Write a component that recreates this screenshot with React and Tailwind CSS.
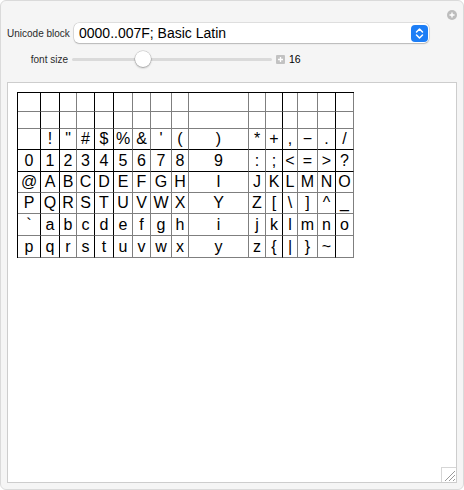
import React from "react";

// column right-border colours, one per column (black or mid gray like the reference)
const colLine = [
  "border-r-black",
  "border-r-black",
  "border-r-[#7f7f7f]",
  "border-r-black",
  "border-r-black",
  "border-r-[#7f7f7f]",
  "border-r-[#7f7f7f]",
  "border-r-[#7f7f7f]",
  "border-r-[#7f7f7f]",
  "border-r-[#7f7f7f]",
  "border-r-[#7f7f7f]",
  "border-r-black",
  "border-r-[#7f7f7f]",
  "border-r-[#7f7f7f]",
  "border-r-black",
  "border-r-[#7f7f7f]",
];

const rowLine = [
  "border-b-[#7f7f7f]",
  "border-b-[#7f7f7f]",
  "border-b-black",
  "border-b-black",
  "border-b-[#7f7f7f]",
  "border-b-[#7f7f7f]",
  "border-b-[#7f7f7f]",
  "border-b-[#7f7f7f]",
];

const rows = [
  Array(16).fill(""),
  Array(16).fill(""),
  [" ", "!", '"', "#", "$", "%", "&", "'", "(", ")", "*", "+", ",", "−", ".", "/"],
  "0123456789:;<=>?".split(""),
  "@ABCDEFGHIJKLMNO".split(""),
  "PQRSTUVWXYZ[\\]^_".split(""),
  "`abcdefghijklmno".split(""),
  [..."pqrstuvwxyz{|}~".split(""), ""],
];

function CharGrid() {
  return (
    <div className="grid grid-cols-[23px_19px_17px_18px_19px_19px_18px_21px_17px_60px_17px_17px_15px_20px_18px_18px] grid-rows-[19px_17px_21px_22px_21px_21px_22px_22px] w-fit border-l border-t border-black">
      {rows.map((r, ri) =>
        r.map((ch, ci) => (
          <div
            key={ri + "-" + ci}
            className={
              "flex items-center justify-center border-r border-b text-[16px] leading-none text-black " +
              colLine[ci] +
              " " +
              rowLine[ri]
            }
          >
            {ch}
          </div>
        ))
      )}
    </div>
  );
}

export default function App() {
  return (
    <div className="relative w-[464px] h-[490px] bg-[#f5f5f5] border border-[#dadada] rounded-[6px] pt-[22px] font-['Liberation_Sans',Arial,sans-serif] overflow-hidden">
      {/* little add-bookmark button in the corner */}
      <svg className="absolute right-[6px] top-[9px]" width="10" height="10" viewBox="0 0 10 10">
        <circle cx="5" cy="5" r="5" fill="#bdbdbd" />
        <path d="M5 2.5v5M2.5 5h5" stroke="white" strokeWidth="1.4" />
      </svg>

      {/* Unicode block popup */}
      <div className="flex items-center h-[20px] ml-[6px]">
        <div className="w-[61px] text-right text-[10px] text-[#2a2a2a] whitespace-nowrap">Unicode block</div>
        <div className="ml-[6px] w-[355px] h-[20px] flex items-center justify-between bg-white rounded-[5px] shadow-[0_0_0_0.5px_rgba(0,0,0,0.18),0_1px_1.5px_rgba(0,0,0,0.18)] pl-[5px] pr-[1px]">
          <span className="text-[14px] text-black leading-none">0000..007F; Basic Latin</span>
          <div className="w-[17px] h-[17px] rounded-[4px] bg-[#1d7ef6] flex items-center justify-center">
            <svg width="9" height="13" viewBox="0 0 9 13">
              <path d="M1.5 5 L4.5 2 L7.5 5 M1.5 8 L4.5 11 L7.5 8" fill="none" stroke="white" strokeWidth="1.5" strokeLinecap="round" strokeLinejoin="round" />
            </svg>
          </div>
        </div>
      </div>

      {/* font size slider */}
      <div className="flex items-center h-[20px] ml-[6px] mt-[6px]">
        <div className="w-[61px] text-right text-[10px] text-[#2a2a2a] whitespace-nowrap">font size</div>
        <div className="relative ml-[4px] w-[200px] h-[16px] flex items-center">
          <div className="w-full h-[3px] rounded-full bg-[#dadada]" />
          <div className="absolute left-[63px] top-0 w-[16px] h-[16px] rounded-full bg-white shadow-[0_0_0_0.5px_rgba(0,0,0,0.2),0_1px_2px_rgba(0,0,0,0.3)]" />
        </div>
        <svg className="ml-[4px]" width="9" height="9" viewBox="0 0 9 9">
          <rect width="9" height="9" rx="1" fill="#c2c2c2" />
          <path d="M4.5 2v5M2 4.5h5" stroke="white" strokeWidth="1.3" />
        </svg>
        <span className="ml-[4px] text-[10.5px] text-black leading-none">16</span>
      </div>

      {/* output pane */}
      <div className="relative mt-[13px] mx-[6px] h-[401px] bg-white border border-[#cdcdcd] pl-[9px] pt-[9px]">
        <CharGrid />
        <div className="absolute right-0 bottom-0 w-[15px] h-[15px] border-l border-t border-[#d6d6d6] bg-white">
          <svg width="14" height="14" viewBox="0 0 14 14">
            <path d="M3 13 L13 3 M7 13 L13 7 M11 13 L13 11" stroke="#9a9a9a" strokeWidth="1" />
          </svg>
        </div>
      </div>
    </div>
  );
}
